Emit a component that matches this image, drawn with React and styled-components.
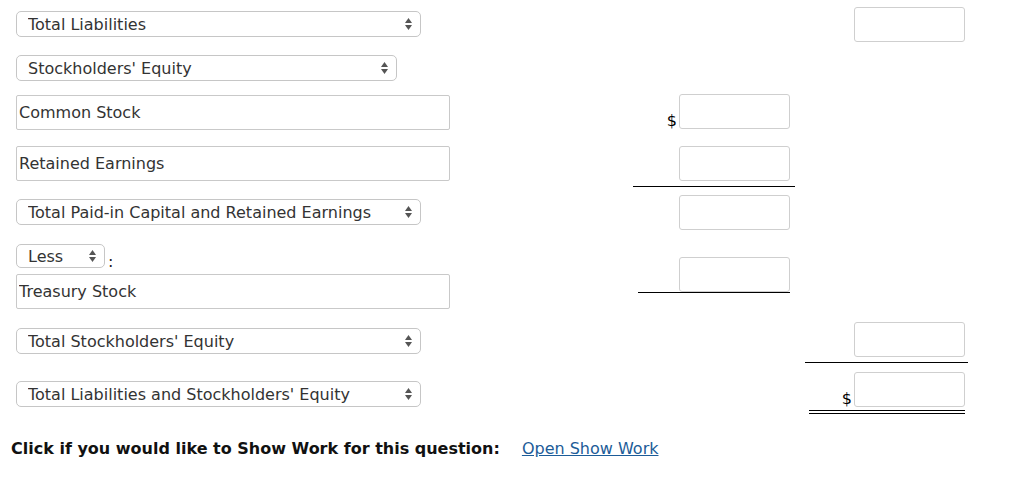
import React from 'react'
import styled, { createGlobalStyle } from 'styled-components'

const GlobalStyle = createGlobalStyle`
  html, body { margin: 0; padding: 0; background: #fff; }
  body { font-family: "DejaVu Sans", Verdana, sans-serif; color: #000; }
`

const Page = styled.div`
  padding: 7px 0 0 16px;
  display: flex;
  flex-direction: column;
`

const Row = styled.div`
  display: grid;
  grid-template-columns: 617px 167px 175px;
  align-items: start;
  margin-top: ${({ $mt }) => $mt || 0}px;
`

const LabelCell = styled.div`
  margin-top: ${({ $offset }) => $offset || 0}px;
  display: flex;
  flex-direction: column;
  align-items: flex-start;
  gap: 6px;
`

const AmountCell = styled.div`
  grid-column: ${({ $col }) => $col};
  display: flex;
  justify-content: flex-end;
  align-items: flex-end;
  margin-top: ${({ $offset }) => $offset || 0}px;
  margin-left: ${({ $ml }) => $ml || 0}px;
  margin-right: ${({ $mr }) => $mr || 0}px;
  padding-right: ${({ $pr }) => $pr || 0}px;
  padding-bottom: ${({ $pb }) => $pb || 0}px;
  border-bottom: ${({ $line }) =>
    $line === 'double' ? '4px double #000' : $line === 'single' ? '1px solid #000' : 'none'};
`

const Dollar = styled.span`
  font-size: 16px;
  line-height: 16px;
  margin-right: 2px;
`

const AmountInput = styled.input`
  box-sizing: border-box;
  width: 111px;
  height: 35px;
  border: 1px solid #cfcfcf;
  border-radius: 3px;
  background: #fff;
  padding: 0 4px;
  font: 16px "DejaVu Sans", Verdana, sans-serif;
  outline: none;
`

const TextInput = styled.input`
  box-sizing: border-box;
  width: 434px;
  height: 35px;
  border: 1px solid #c9c9c9;
  border-radius: 2px;
  padding: 0 2px;
  font: 16px "DejaVu Sans", Verdana, sans-serif;
  color: #333;
  background: #fff;
  outline: none;
`

const SelectBox = styled.div`
  position: relative;
  width: ${({ $w }) => $w}px;
  height: ${({ $h }) => $h || 26}px;
`

const NativeSelect = styled.select`
  appearance: none;
  -webkit-appearance: none;
  box-sizing: border-box;
  width: 100%;
  height: 100%;
  border: 1px solid #c6c6c6;
  border-radius: 5px;
  background: #fff;
  padding: 0 20px 0 11px;
  font: 16px "DejaVu Sans", Verdana, sans-serif;
  color: #333;
  outline: none;
`

const Arrows = styled.svg`
  position: absolute;
  right: 9px;
  top: 50%;
  transform: translateY(-50%);
  pointer-events: none;
`

const LessLine = styled.div`
  display: flex;
  align-items: flex-end;
`

const Colon = styled.span`
  font-size: 16px;
  line-height: 16px;
  margin-left: 3px;
  margin-bottom: -2px;
  color: #222;
`

const Footer = styled.div`
  margin-top: 25px;
  display: flex;
  align-items: baseline;
  gap: 22px;
  margin-left: -5px;
  line-height: 20px;
`

const Prompt = styled.span`
  font-weight: bold;
  font-size: 16px;
  color: #111;
`

const Link = styled.a`
  font-size: 16px;
  color: #1c5c98;
  text-decoration: underline;
  cursor: pointer;
`

const Select = ({ width, height, label }) => (
  <SelectBox $w={width} $h={height}>
    <NativeSelect defaultValue={label}>
      <option>{label}</option>
    </NativeSelect>
    <Arrows width="7" height="12" viewBox="0 0 7 12">
      <path d="M3.5 0 L7 5 L0 5 Z" fill="#555" />
      <path d="M3.5 12 L7 7 L0 7 Z" fill="#555" />
    </Arrows>
  </SelectBox>
)

export default function App() {
  return (
    <>
      <GlobalStyle />
      <Page>
        <Row>
          <LabelCell $offset={4}>
            <Select width={405} label="Total Liabilities" />
          </LabelCell>
          <AmountCell $col={3} $pr={10}>
            <AmountInput />
          </AmountCell>
        </Row>

        <Row $mt={13}>
          <LabelCell>
            <Select width={381} label="Stockholders' Equity" />
          </LabelCell>
        </Row>

        <Row $mt={13}>
          <LabelCell $offset={1}>
            <TextInput defaultValue="Common Stock" />
          </LabelCell>
          <AmountCell $col={2} $pr={10}>
            <Dollar>$</Dollar>
            <AmountInput />
          </AmountCell>
        </Row>

        <Row $mt={16}>
          <LabelCell>
            <TextInput defaultValue="Retained Earnings" />
          </LabelCell>
          <AmountCell $col={2} $mr={5} $pr={5} $pb={5} $line="single">
            <AmountInput />
          </AmountCell>
        </Row>

        <Row $mt={8}>
          <LabelCell $offset={4}>
            <Select width={405} label="Total Paid-in Capital and Retained Earnings" />
          </LabelCell>
          <AmountCell $col={2} $pr={10}>
            <AmountInput />
          </AmountCell>
        </Row>

        <Row $mt={14}>
          <LabelCell>
            <LessLine>
              <Select width={89} height={24} label="Less" />
              <Colon>:</Colon>
            </LessLine>
            <TextInput defaultValue="Treasury Stock" />
          </LabelCell>
          <AmountCell $col={2} $offset={13} $ml={5} $mr={10} $line="single">
            <AmountInput />
          </AmountCell>
        </Row>

        <Row $mt={13}>
          <LabelCell $offset={6}>
            <Select width={405} label="Total Stockholders' Equity" />
          </LabelCell>
          <AmountCell $col={3} $ml={5} $mr={7} $pr={3} $pb={5} $line="single">
            <AmountInput />
          </AmountCell>
        </Row>

        <Row $mt={9}>
          <LabelCell $offset={9}>
            <Select width={405} label="Total Liabilities and Stockholders' Equity" />
          </LabelCell>
          <AmountCell $col={3} $ml={9} $mr={10} $pb={3} $line="double">
            <Dollar>$</Dollar>
            <AmountInput />
          </AmountCell>
        </Row>

        <Footer>
          <Prompt>Click if you would like to Show Work for this question:</Prompt>
          <Link>Open Show Work</Link>
        </Footer>
      </Page>
    </>
  )
}
